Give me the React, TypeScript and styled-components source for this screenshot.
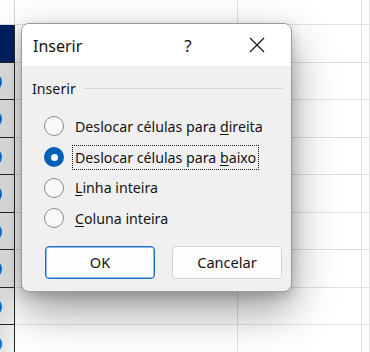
import React from 'react';
import styled, { createGlobalStyle } from 'styled-components';

const GlobalStyle = createGlobalStyle`
  html, body {
    margin: 0;
    padding: 0;
    background: #ffffff;
  }
  body {
    font-family: 'Noto Sans', 'Open Sans', Arial, sans-serif;
    color: #141414;
  }
`;

const Sheet = styled.div`
  position: relative;
  width: 370px;
  height: 352px;
  overflow: hidden;
  background: #ffffff;
  display: grid;
  grid-template-columns: 15px 223px 124px 1fr;
  grid-template-rows: 25px repeat(9, 37.5px);
`;

const Cell = styled.div`
  box-sizing: border-box;
  border-right: 1px solid #e0e0e0;
  border-bottom: 1px solid #e0e0e0;
  background: #ffffff;
`;

const HeadCell = styled.div<{ $navy?: boolean }>`
  box-sizing: border-box;
  position: relative;
  overflow: hidden;
  border-right: 1px solid #262626;
  border-bottom: 1px solid #262626;
  background: ${({ $navy }) =>
    $navy ? '#002060' : 'linear-gradient(90deg, #e2e2e2 0%, #f3f3f3 100%)'};

  ${({ $navy }) =>
    $navy
      ? ''
      : `&::after {
    content: '';
    position: absolute;
    left: -16px;
    top: 50%;
    width: 12px;
    height: 12px;
    margin-top: -8px;
    border-radius: 50%;
    border: 3px solid #0a72d6;
    background: #d8e9fb;
  }`}
`;

const TopCell = styled(Cell)`
  border-right-color: #d6d6d6;
`;

const Dialog = styled.div`
  position: absolute;
  left: 21px;
  top: 23px;
  width: 271px;
  height: 269px;
  box-sizing: border-box;
  border: 1px solid #9c9c9c;
  border-radius: 8px;
  overflow: hidden;
  background: #f0f0f0;
  box-shadow: 0 18px 44px rgba(0, 0, 0, 0.4), 0 4px 12px rgba(0, 0, 0, 0.18);
  display: flex;
  flex-direction: column;
`;

const TitleBar = styled.div`
  height: 42px;
  background: #ffffff;
  display: flex;
  align-items: center;
  padding: 0 11px 0 11px;
  flex-shrink: 0;
`;

const Title = styled.div`
  font-size: 16px;
  flex: 1;
  padding-top: 1px;
`;

const CaptionButton = styled.div`
  width: 46px;
  height: 42px;
  display: flex;
  align-items: center;
  justify-content: center;
  font-size: 17px;
`;

const CaptionGap = styled.div`
  width: 23px;
`;

const Body = styled.div`
  flex: 1;
  padding: 12px 8px 0 10px;
  font-size: 14.2px;
`;

const GroupHeader = styled.div`
  display: flex;
  align-items: center;
  height: 20px;
`;

const GroupLine = styled.div`
  flex: 1;
  height: 1px;
  background: #d6d6d6;
  margin-left: 8px;
`;

const RadioList = styled.div`
  margin-top: 13px;
  padding-left: 12px;
  display: flex;
  flex-direction: column;
`;

const RadioRow = styled.div`
  height: 30.7px;
  display: flex;
  align-items: center;
`;

const RadioCircle = styled.div<{ $checked?: boolean }>`
  box-sizing: border-box;
  width: 20px;
  height: 20px;
  border-radius: 50%;
  flex-shrink: 0;
  display: flex;
  align-items: center;
  justify-content: center;
  background: ${({ $checked }) => ($checked ? '#005fb8' : '#f8f8f8')};
  border: ${({ $checked }) => ($checked ? 'none' : '1.5px solid #8b8b8b')};

  &::after {
    content: '';
    display: ${({ $checked }) => ($checked ? 'block' : 'none')};
    width: 7px;
    height: 7px;
    border-radius: 50%;
    background: #ffffff;
  }
`;

const RadioLabel = styled.div<{ $focused?: boolean }>`
  box-sizing: border-box;
  height: 25px;
  margin-left: 8px;
  padding: 0 2px;
  display: flex;
  align-items: center;
  white-space: pre;
  border: 1px dotted ${({ $focused }) => ($focused ? '#1b1b1b' : 'transparent')};

  u {
    text-decoration-thickness: 1px;
    text-underline-offset: 2px;
  }
`;

const ButtonRow = styled.div`
  display: flex;
  gap: 17px;
  margin: 12px 0 0 13px;
`;

const Button = styled.div<{ $primary?: boolean }>`
  box-sizing: border-box;
  width: 110px;
  height: 33px;
  border-radius: 4px;
  background: #fdfdfd;
  border: 1px solid ${({ $primary }) => ($primary ? '#1f74c9' : '#d3d3d3')};
  box-shadow: ${({ $primary }) => ($primary ? 'inset 0 0 0 0.5px #1f74c9' : 'none')};
  display: flex;
  align-items: center;
  justify-content: center;
  font-size: 14.6px;
`;

const CloseIcon = () => (
  <svg width="16" height="16" viewBox="0 0 16 16">
    <path d="M1 1 L15 15 M15 1 L1 15" stroke="#1b1b1b" strokeWidth="1.3" fill="none" />
  </svg>
);

const options = [
  { before: 'Deslocar células para ', key: 'd', after: 'ireita', checked: false },
  { before: 'Deslocar células para ', key: 'b', after: 'aixo', checked: true },
  { before: '', key: 'L', after: 'inha inteira', checked: false },
  { before: '', key: 'C', after: 'oluna inteira', checked: false },
];

export default function App() {
  const rows = Array.from({ length: 10 });
  return (
    <>
      <GlobalStyle />
      <Sheet>
        {rows.map((_, r) => (
          <React.Fragment key={r}>
            {r === 0 ? <TopCell /> : <HeadCell $navy={r === 1} />}
            <Cell />
            <Cell />
            <Cell />
          </React.Fragment>
        ))}

        <Dialog>
          <TitleBar>
            <Title>Inserir</Title>
            <CaptionButton>?</CaptionButton>
            <CaptionGap />
            <CaptionButton>
              <CloseIcon />
            </CaptionButton>
          </TitleBar>
          <Body>
            <GroupHeader>
              Inserir
              <GroupLine />
            </GroupHeader>
            <RadioList>
              {options.map((o, i) => (
                <RadioRow key={i}>
                  <RadioCircle $checked={o.checked} />
                  <RadioLabel $focused={o.checked}>
                    <span>
                      {o.before}
                      <u>{o.key}</u>
                      {o.after}
                    </span>
                  </RadioLabel>
                </RadioRow>
              ))}
            </RadioList>
            <ButtonRow>
              <Button $primary>OK</Button>
              <Button>Cancelar</Button>
            </ButtonRow>
          </Body>
        </Dialog>
      </Sheet>
    </>
  );
}
